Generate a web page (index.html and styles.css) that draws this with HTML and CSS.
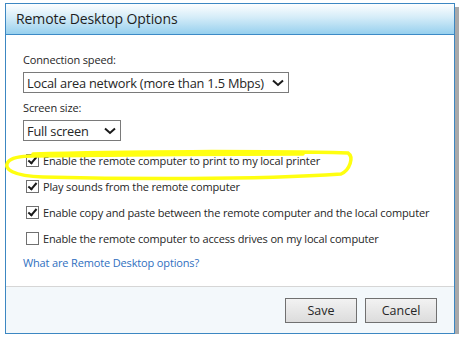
FILE: index.html
```html
<!DOCTYPE html>
<html lang="en">
<head>
    <meta charset="UTF-8">
    <title>Remote Desktop Options</title>
    <link rel="stylesheet" href="styles.css">
</head>
<body>
    <div class="dialog">
        <div class="title-bar">Remote Desktop Options</div>
        <div class="dialog-body">
            <div class="field-label">Connection speed:</div>
            <div class="dropdown dropdown-speed">
                <span>Local area network (more than 1.5 Mbps)</span>
                <svg class="chevron" width="12" height="8" viewBox="0 0 12 8"><path d="M1 1.5 L6 6 L11 1.5" fill="none" stroke="#1a1a1a" stroke-width="2"/></svg>
            </div>
            <div class="field-label">Screen size:</div>
            <div class="dropdown dropdown-size">
                <span>Full screen</span>
                <svg class="chevron" width="12" height="8" viewBox="0 0 12 8"><path d="M1 1.5 L6 6 L11 1.5" fill="none" stroke="#1a1a1a" stroke-width="2"/></svg>
            </div>
            <div class="options">
                <label class="option"><span class="check checked"></span>Enable the remote computer to print to my local printer</label>
                <label class="option"><span class="check checked"></span>Play sounds from the remote computer</label>
                <label class="option"><span class="check checked"></span>Enable copy and paste between the remote computer and the local computer</label>
                <label class="option"><span class="check"></span>Enable the remote computer to access drives on my local computer</label>
            </div>
            <a class="help-link" href="#">What are Remote Desktop options?</a>
        </div>
        <div class="dialog-footer">
            <button type="button">Save</button>
            <button type="button">Cancel</button>
        </div>
        <!-- yellow marker drawn round the first option -->
        <svg class="marker" width="360" height="36" viewBox="0 0 360 36">
            <path d="M30 6 C 120 3, 260 3, 345 5 C 351 9, 347 22, 338 26 C 250 32, 120 31, 40 29 C 10 28, 0 21, 5 14 C 9 9, 18 8, 30 8 C 100 7, 220 6, 300 6" fill="none" stroke="#ffff10" stroke-width="3.5" stroke-linecap="round"/>
        </svg>
    </div>
</body>
</html>
```

FILE: styles.css
```css
body {
    margin: 0;
    padding: 0;
    background-color: #fff;
    font-family: "Open Sans", Arial, sans-serif;
    color: #262626;
}

.dialog {
    position: relative;
    width: 448px;
    height: 329px;
    margin: 3px 0 0 5px;
    border: 1px solid #3c87c2;
    box-shadow: 4px 4px 0 #a9a9a9;
    background-color: #fff;
    display: flex;
    flex-direction: column;
}

.title-bar {
    height: 30px;
    line-height: 29px;
    padding-left: 10px;
    font-size: 14px;
    letter-spacing: -0.1px;
    color: #1e1e1e;
    background: linear-gradient(to bottom, #fdfeff 0%, #d4ecf8 45%, #97d0ee 100%);
    border-bottom: 1px solid #3c8ac6;
}

.dialog-body {
    flex: 1;
    padding: 17px 0 0 17px;
    font-size: 11px;
    letter-spacing: -0.15px;
    white-space: nowrap;
}

.field-label {
    height: 16px;
    line-height: 16px;
}

.dropdown {
    display: flex;
    align-items: center;
    justify-content: space-between;
    height: 19px;
    border: 1px solid #7a7a7a;
    padding: 0 4px 0 3px;
    font-size: 12.8px;
    letter-spacing: -0.2px;
    margin: 4px 0 7px;
    box-sizing: content-box;
}

.dropdown-speed {
    width: 257px;
}

.dropdown-size {
    width: 89px;
}

.options {
    margin-top: 10px;
    display: flex;
    flex-direction: column;
    gap: 8px;
}

.option {
    display: flex;
    align-items: center;
    height: 18px;
    padding-left: 3px;
}

.check {
    width: 11px;
    height: 11px;
    border: 1px solid #707070;
    margin-right: 4px;
    position: relative;
}

.check.checked::after {
    content: "";
    position: absolute;
    left: 3px;
    top: 0;
    width: 3px;
    height: 7px;
    border: solid #1a1a1a;
    border-width: 0 2px 2px 0;
    transform: rotate(40deg);
}

.help-link {
    display: block;
    margin-top: 8px;
    color: #2f6fc0;
    text-decoration: none;
}

.dialog-footer {
    height: 47px;
    border-top: 1px solid #d6d6d6;
    background-color: #f3f8fb;
    display: flex;
    justify-content: flex-end;
    align-items: flex-start;
    gap: 8px;
    padding: 11px 17px 0 0;
    box-sizing: border-box;
}

.dialog-footer button {
    width: 72px;
    height: 25px;
    font-family: "Open Sans", Arial, sans-serif;
    font-size: 12.5px;
    color: #262626;
    border: 1px solid #707070;
    background: linear-gradient(to bottom, #f2f2f2, #dcdcdc);
    padding: 0;
}

.marker {
    position: absolute;
    left: -3px;
    top: 144px;
}
```
